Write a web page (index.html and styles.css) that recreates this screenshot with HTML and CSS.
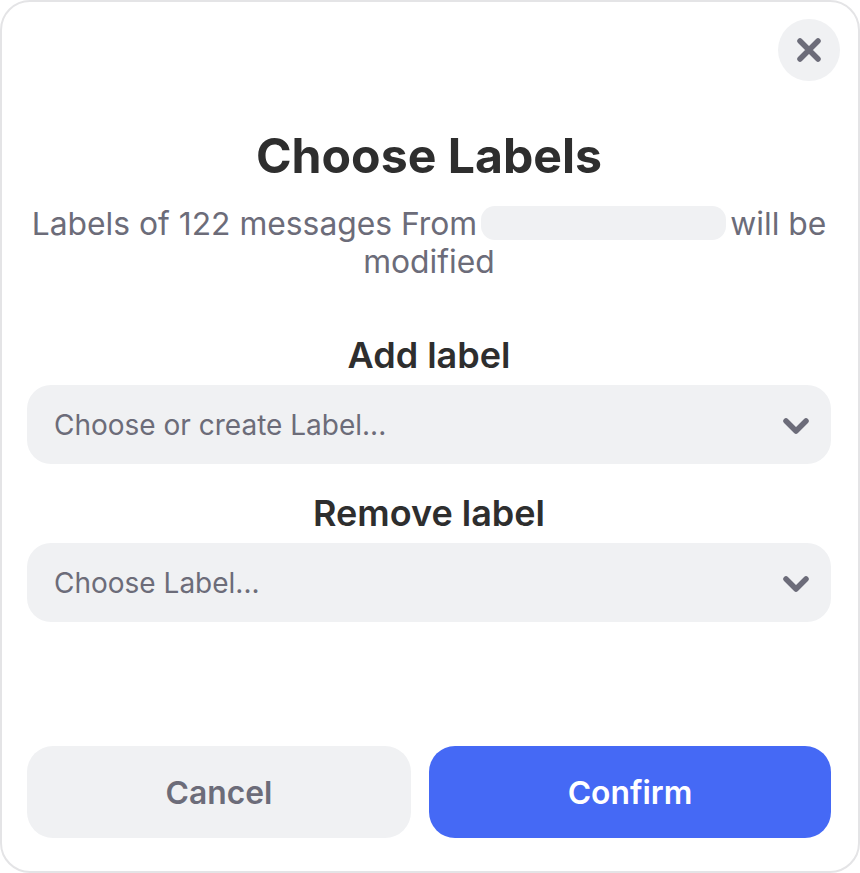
FILE: index.html
```html
<!DOCTYPE html>
<html lang="en">
<head>
    <meta charset="UTF-8">
    <title>Choose Labels</title>
    <link rel="stylesheet" href="styles.css">
</head>
<body>
    <div class="modal">
        <div class="modal-top">
            <button class="close-btn" type="button" aria-label="Close">
                <svg width="26" height="26" viewBox="0 0 26 26"><path d="M4 4L22 22M22 4L4 22" stroke="#6c6c79" stroke-width="5.5" stroke-linecap="round" fill="none"/></svg>
            </button>
        </div>
        <h1>Choose Labels</h1>
        <p class="subtitle">Labels of 122 messages From<span class="redacted"></span>will be modified</p>

        <div class="field field-add">
            <label>Add label</label>
            <div class="select">
                <span>Choose or create Label...</span>
                <svg class="chevron" width="26" height="17" viewBox="0 0 26 17"><path d="M3 3L13 13L23 3" stroke="#6c6c79" stroke-width="5.5" stroke-linecap="round" stroke-linejoin="round" fill="none"/></svg>
            </div>
        </div>
        <div class="field">
            <label>Remove label</label>
            <div class="select">
                <span>Choose Label...</span>
                <svg class="chevron" width="26" height="17" viewBox="0 0 26 17"><path d="M3 3L13 13L23 3" stroke="#6c6c79" stroke-width="5.5" stroke-linecap="round" stroke-linejoin="round" fill="none"/></svg>
            </div>
        </div>

        <div class="actions">
            <button class="btn btn-cancel" type="button">Cancel</button>
            <button class="btn btn-confirm" type="button">Confirm</button>
        </div>
    </div>
</body>
</html>
```

FILE: styles.css
```css
body {
    margin: 0;
    background-color: #fff;
    font-family: Inter, "Liberation Sans", sans-serif;
}
.modal {
    box-sizing: border-box;
    width: 860px;
    height: 873px;
    padding: 17px 27px 33px 25px;
    border: 2px solid #e4e4e6;
    border-radius: 30px;
    background-color: #fff;
    display: flex;
    flex-direction: column;
}
.modal-top {
    display: flex;
    justify-content: flex-end;
    margin-right: -9px;
}
.close-btn {
    width: 62px;
    height: 62px;
    padding: 0;
    border: 0;
    border-radius: 50%;
    background-color: #f0f1f3;
    display: flex;
    align-items: center;
    justify-content: center;
}
h1 {
    margin: 42px 0 0;
    font-size: 48.2px;
    line-height: 66px;
    font-weight: 700;
    color: #2e2e2e;
    text-align: center;
}
.subtitle {
    margin: 16px 0 0;
    font-size: 31.8px;
    line-height: 38px;
    color: #6c6c79;
    text-align: center;
}
.redacted {
    display: inline-block;
    width: 245px;
    height: 34px;
    margin: 0 4px;
    border-radius: 14px;
    background-color: #f0f1f3;
    vertical-align: -5px;
}
.field-add {
    margin-top: 52px;
}
.field {
    margin-bottom: 27px;
}
.field label {
    display: block;
    font-size: 36px;
    line-height: 44px;
    font-weight: 600;
    color: #2e2e2e;
    text-align: center;
}
.select {
    height: 79px;
    margin-top: 8px;
    padding: 0 22px 0 27px;
    border-radius: 24px;
    background-color: #f0f1f3;
    display: flex;
    align-items: center;
    justify-content: space-between;
    font-size: 28px;
    color: #6c6c79;
}
.chevron {
    margin-top: 3px;
}
.actions {
    margin-top: auto;
    display: flex;
    gap: 18px;
}
.btn {
    height: 92px;
    border: 0;
    border-radius: 26px;
    font-family: inherit;
    font-size: 31.8px;
    font-weight: 600;
}
.btn-cancel {
    width: 384px;
    background-color: #f0f1f3;
    color: #6c6c79;
}
.btn-confirm {
    flex: 1;
    background-color: #4569f5;
    color: #fff;
}
```
